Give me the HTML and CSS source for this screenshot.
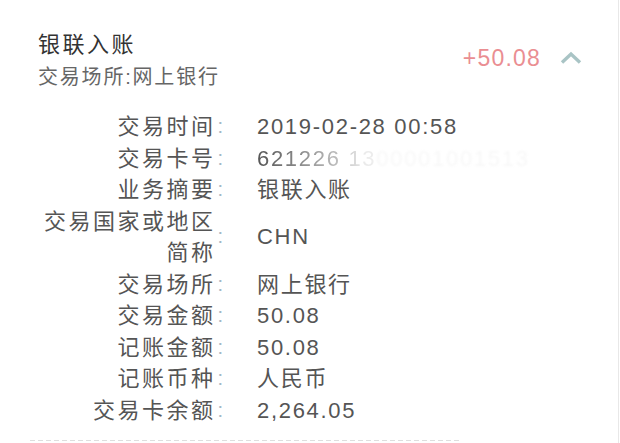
FILE: index.html
```html
<!DOCTYPE html>
<html lang="zh-CN">
<head>
    <meta charset="UTF-8">
    <meta name="viewport" content="width=device-width, initial-scale=1.0">
    <title>交易明细</title>
    <link rel="stylesheet" href="styles.css">
</head>
<body>
    <div class="record">
        <div class="record-head">
            <div class="head-text">
                <div class="title">银联入账</div>
                <div class="subtitle">交易场所:网上银行</div>
            </div>
            <div class="head-right">
                <span class="amount">+50.08</span>
                <svg class="chevron" width="24" height="14" viewBox="0 0 24 14">
                    <polyline points="3,11.5 12,3 21,11.5" fill="none" stroke="#a9c4c5" stroke-width="3.4"/>
                </svg>
            </div>
        </div>

        <div class="details">
            <div class="row">
                <div class="label">交易时间</div>
                <div class="colon">:</div>
                <div class="value">2019-02-28 00:58</div>
            </div>
            <div class="row">
                <div class="label">交易卡号</div>
                <div class="colon">:</div>
                <div class="value card-no">621226 13<span class="blur">00001001513</span></div>
            </div>
            <div class="row">
                <div class="label">业务摘要</div>
                <div class="colon">:</div>
                <div class="value">银联入账</div>
            </div>
            <div class="row">
                <div class="label">交易国家或地区<br>简称</div>
                <div class="colon">:</div>
                <div class="value">CHN</div>
            </div>
            <div class="row">
                <div class="label">交易场所</div>
                <div class="colon">:</div>
                <div class="value">网上银行</div>
            </div>
            <div class="row">
                <div class="label">交易金额</div>
                <div class="colon">:</div>
                <div class="value">50.08</div>
            </div>
            <div class="row">
                <div class="label">记账金额</div>
                <div class="colon">:</div>
                <div class="value">50.08</div>
            </div>
            <div class="row">
                <div class="label">记账币种</div>
                <div class="colon">:</div>
                <div class="value">人民币</div>
            </div>
            <div class="row">
                <div class="label">交易卡余额</div>
                <div class="colon">:</div>
                <div class="value">2,264.05</div>
            </div>
        </div>

        <div class="dashed"></div>
    </div>
</body>
</html>
```

FILE: styles.css
```css
* {
    margin: 0;
    padding: 0;
    box-sizing: border-box;
}

body {
    background: #fff;
    font-family: "Liberation Sans", "Noto Sans CJK SC", sans-serif;
    color: #555;
    overflow: hidden;
}

.record {
    width: 619px;
    height: 443px;
    border-right: 1px solid #e8e8e8;
}

.record-head {
    display: flex;
    justify-content: space-between;
    align-items: center;
    padding: 29px 35px 0 38px;
}

.title {
    font-size: 22px;
    line-height: 32px;
    color: #333;
    letter-spacing: 2.5px;
}

.subtitle {
    font-size: 20px;
    line-height: 32px;
    color: #666;
    letter-spacing: 1.8px;
}

.head-right {
    display: flex;
    align-items: center;
    margin-bottom: 6px;
}

.amount {
    font-size: 23px;
    letter-spacing: 1.2px;
    color: #ea8e92;
}

.chevron {
    display: block;
    margin-left: 18px;
}

.details {
    padding-top: 18px;
}

.row {
    display: grid;
    grid-template-columns: 215.5px 41.5px 1fr;
    align-items: center;
    font-size: 22px;
    line-height: 31.5px;
}

.label {
    text-align: right;
    letter-spacing: 2.5px;
    color: #555;
}

.colon {
    color: #a3b7c6;
    padding-left: 2px;
    font-size: 20px;
}

.value {
    letter-spacing: 1.7px;
    color: #555;
    white-space: nowrap;
}

.card-no {
    -webkit-mask-image: linear-gradient(to right, #000 0, rgba(0, 0, 0, 0.7) 40px, rgba(0, 0, 0, 0.35) 85px, rgba(0, 0, 0, 0.12) 108px, rgba(0, 0, 0, 0.09) 125px, rgba(0, 0, 0, 0.09) 100%);
    mask-image: linear-gradient(to right, #000 0, rgba(0, 0, 0, 0.7) 40px, rgba(0, 0, 0, 0.35) 85px, rgba(0, 0, 0, 0.12) 108px, rgba(0, 0, 0, 0.09) 125px, rgba(0, 0, 0, 0.09) 100%);
}

.blur {
    color: #aaa;
    filter: blur(0.8px);
}

.dashed {
    margin: 14px 0 0 30px;
    width: 430px;
    height: 1px;
    background: repeating-linear-gradient(to right, #dedede 0, #dedede 5px, transparent 5px, transparent 8px);
}
```
